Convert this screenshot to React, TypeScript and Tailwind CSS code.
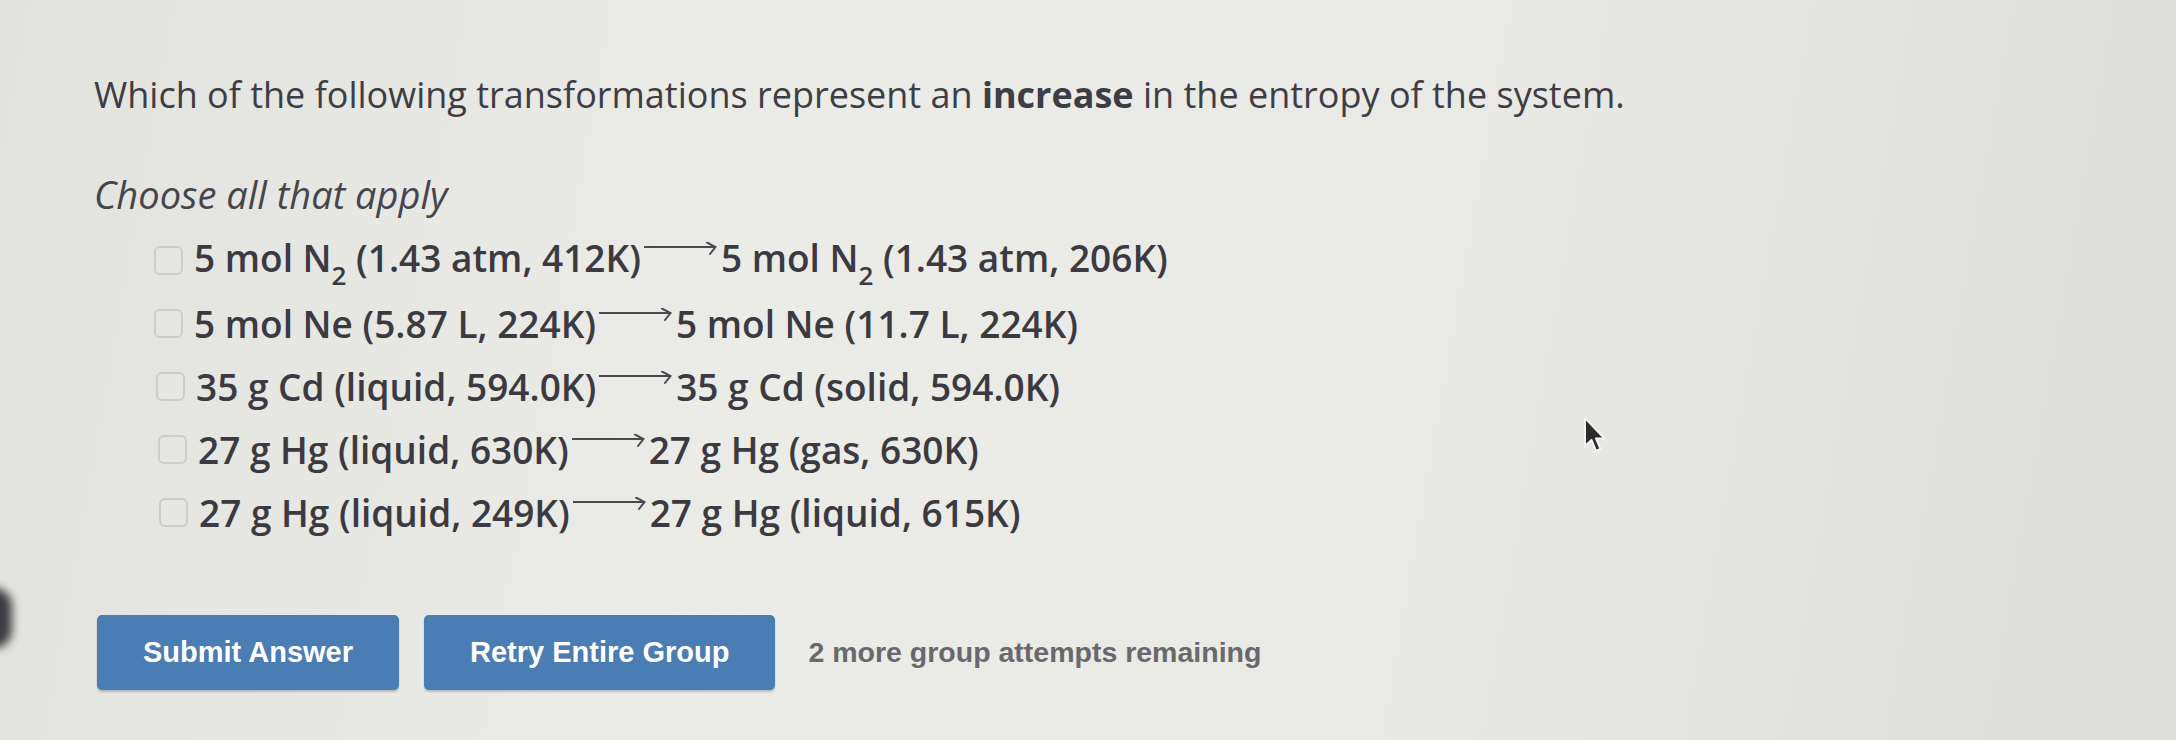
import React from "react";

type Option = { id: string; parts: React.ReactNode; shift: string };

const Sub = ({ children }: { children: React.ReactNode }) => (
    <span className="text-[26px] leading-none align-[-13px]">{children}</span>
);

const Arrow = () => (
    <svg width="74" height="14" viewBox="0 0 74 14" className="inline-block align-[16px] mx-[3px]">
        <path d="M0 5 L71 5" stroke="#4a4950" strokeWidth="2.2" fill="none" />
        <path d="M63 0.5 L71.5 5 L66 12" stroke="#4a4950" strokeWidth="2" fill="none" strokeLinecap="round" />
    </svg>
);

const options: Option[] = [
    {
        id: "n2",
        shift: "ml-0",
        parts: (
            <>
                5 mol N<Sub>2</Sub> (1.43 atm, 412K)
                <Arrow />
                5 mol N<Sub>2</Sub> (1.43 atm, 206K)
            </>
        ),
    },
    {
        id: "ne",
        shift: "ml-0",
        parts: (
            <>
                5 mol Ne (5.87 L, 224K)
                <Arrow />
                5 mol Ne (11.7 L, 224K)
            </>
        ),
    },
    {
        id: "cd",
        shift: "ml-[2px]",
        parts: (
            <>
                35 g Cd (liquid, 594.0K)
                <Arrow />
                35 g Cd (solid, 594.0K)
            </>
        ),
    },
    {
        id: "hg1",
        shift: "ml-[4px]",
        parts: (
            <>
                27 g Hg (liquid, 630K)
                <Arrow />
                27 g Hg (gas, 630K)
            </>
        ),
    },
    {
        id: "hg2",
        shift: "ml-[5px]",
        parts: (
            <>
                27 g Hg (liquid, 249K)
                <Arrow />
                27 g Hg (liquid, 615K)
            </>
        ),
    },
];

export default function App() {
    return (
        <div className="relative w-[2176px] h-[740px] overflow-hidden bg-[linear-gradient(100deg,#e2e2de_0%,#ebebe7_35%,#e9e9e5_65%,#dcdcd8_100%)] font-['Open_Sans',sans-serif]">
            {/* dark blob at the left edge of the photo */}
            <div className="absolute left-[-24px] top-[588px] w-[36px] h-[60px] rounded-full bg-[#3c3c40] blur-[5px]" />

            <div className="flex flex-col pl-[94px] pt-[71px]">
                <h1 className="text-[36px] leading-[48px] text-[#3e3d45] font-normal">
                    Which of the following transformations represent an <b className="font-bold">increase</b> in the entropy of the system.
                </h1>

                <p className="mt-[51px] text-[38px] leading-[48px] italic text-[#46454c]">Choose all that apply</p>

                <div className="flex flex-col mt-[11px] pl-[60px]">
                    {options.map((o) => (
                        <label key={o.id} className={`flex items-center h-[63px] gap-[11px] ${o.shift}`}>
                            <span className="w-[29px] h-[29px] rounded-[6px] border-2 border-[#cdcdc9] bg-[#e6e6e2] shrink-0" />
                            <span className="text-[37px] leading-[48px] font-semibold text-[#3b3a41] whitespace-nowrap">
                                {o.parts}
                            </span>
                        </label>
                    ))}
                </div>

                <div className="flex items-center mt-[71px] ml-[3px] gap-[25px] font-['Liberation_Sans',Arial,sans-serif]">
                    <button className="h-[75px] px-[46px] rounded-[5px] bg-[#4a7db4] text-white text-[29px] font-bold shadow-[0_2px_2px_rgba(0,0,0,0.2)]">
                        Submit Answer
                    </button>
                    <button className="h-[75px] px-[46px] rounded-[5px] bg-[#4a7db4] text-white text-[29px] font-bold shadow-[0_2px_2px_rgba(0,0,0,0.2)]">
                        Retry Entire Group
                    </button>
                    <span className="ml-[8px] text-[28.5px] font-bold text-[#69686d]">2 more group attempts remaining</span>
                </div>
            </div>

            {/* mouse pointer */}
            <svg width="24" height="38" viewBox="0 0 24 38" className="absolute left-[1583px] top-[416px]">
                <path d="M2 2 L2 30 L8.5 24 L13 35 L17.5 33 L13 22.5 L21.5 22.5 Z" fill="#2b2b2e" stroke="#f4f4f2" strokeWidth="2" strokeLinejoin="round" />
            </svg>
        </div>
    );
}
